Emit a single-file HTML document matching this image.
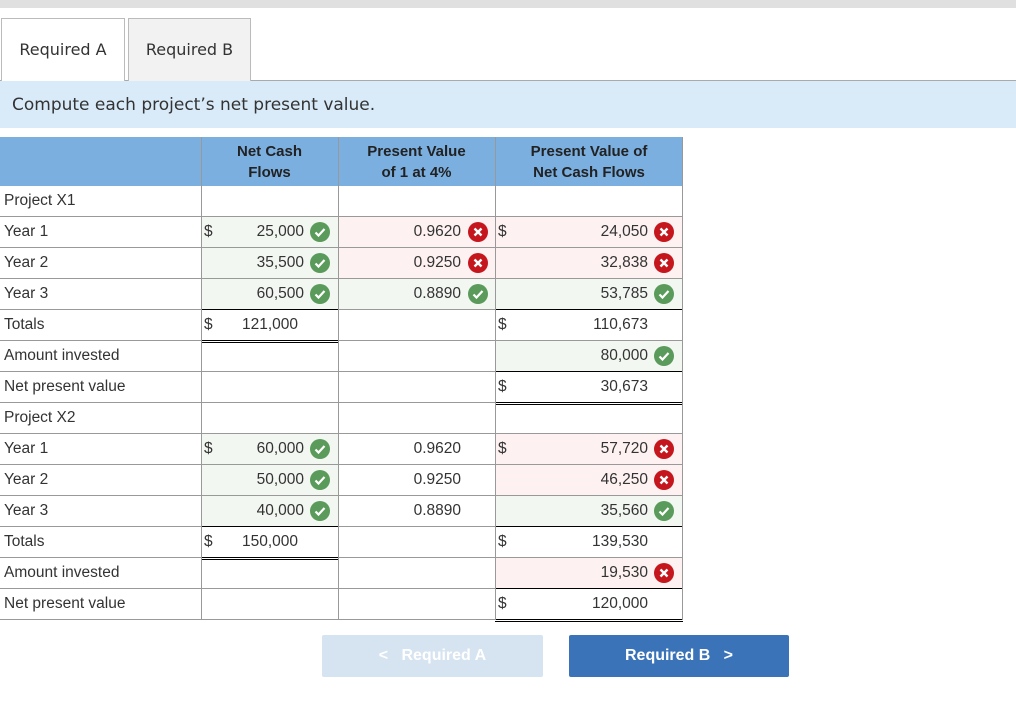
<!DOCTYPE html>
<html><head><meta charset="utf-8"><style>
*{margin:0;padding:0;box-sizing:border-box}
body{width:1016px;height:710px;background:#fff;position:relative;overflow:hidden;font-family:"Liberation Sans",sans-serif;color:#333}
.a{position:absolute}
.tab{position:absolute;top:18px;height:63px;border:1px solid #bbb;border-bottom:none;font-family:"DejaVu Sans",sans-serif;font-size:16px;line-height:62px;text-align:center;color:#333}
.h{position:absolute;top:137px;height:49px;background:#7bafe0;font-weight:bold;font-size:15px;text-align:center;line-height:21px;padding-top:4px;color:#222}
.row{position:absolute;left:0;width:683px;height:31px;border-bottom:1px solid #999}
.lbl{position:absolute;left:4px;font-size:15.5px;line-height:30px}
.c{position:absolute;top:0;height:30px;font-size:15.5px;line-height:30px}
.ic{position:absolute;width:20px;height:20px;border-radius:50%;top:5px}
.ok{background:#5a9a5a}.no{background:#c4161c}
.ic svg{position:absolute;left:0;top:0}
.v{position:absolute;top:137px;width:1px;height:483px;background:#999}
</style></head><body>
<div class="a" style="left:0;top:0;width:1016px;height:8px;background:#e0e0e0"></div>
<div class="a" style="left:0;top:80px;width:1016px;height:1px;background:#aaa"></div>
<div class="tab" style="left:1px;width:124px;background:#fff;height:64px">Required A</div>
<div class="tab" style="left:128px;width:123px;background:#f2f2f2">Required B</div>
<div class="a" style="left:0;top:81px;width:1016px;height:47px;background:#d9eaf8;font-family:'DejaVu Sans',sans-serif;font-size:17px;line-height:48px;padding-left:12px;color:#333">Compute each project’s net present value.</div>
<div class="h" style="left:0;width:201px"></div>
<div class="h" style="left:201px;width:137px">Net Cash<br>Flows</div>
<div class="h" style="left:338px;width:157px">Present Value<br>of 1 at 4%</div>
<div class="h" style="left:495px;width:188px">Present Value of<br>Net Cash Flows</div>
<div id="t"></div>
<div class="v" style="left:201px"></div><div class="v" style="left:338px"></div><div class="v" style="left:495px"></div><div class="v" style="left:682px"></div>
<div class="a" style="left:322px;top:635px;width:221px;height:42px;background:#d6e3f0;border-radius:2px;color:#fff;font-weight:bold;font-size:16px;line-height:42px;text-align:center">&lt;&nbsp;&nbsp; Required A</div>
<div class="a" style="left:569px;top:635px;width:220px;height:42px;background:#3a73b8;border-radius:2px;color:#fff;font-weight:bold;font-size:16px;line-height:42px;text-align:center">Required B &nbsp;&nbsp;&gt;</div>
<script>
var OK='<div class="ic ok" style="left:X"><svg width="20" height="20"><path d="M5.5 10.5l3 3 6-6.5" stroke="#fff" stroke-width="2.2" fill="none"/></svg></div>';
var NO='<div class="ic no" style="left:X"><svg width="20" height="20"><path d="M6.5 6.5l7 7M13.5 6.5l-7 7" stroke="#fff" stroke-width="2.4"/></svg></div>';
function ic(t,x){return t?(t=='o'?OK:NO).replace('X',x+'px'):''}
var G='#f3f7f2',P='#fdf1f1';
var R=[
['Project X1'],
['Year 1',[1,'25,000','o',G],['0.9620','x',P],[1,'24,050','x',P]],
['Year 2',[0,'35,500','o',G],['0.9250','x',P],[0,'32,838','x',P]],
['Year 3',[0,'60,500','o',G],['0.8890','o',G],[0,'53,785','o',G]],
['Totals',[1,'121,000','t',''],null,[1,'110,673','t','']],
['Amount invested',null,null,[0,'80,000','o',G]],
['Net present value',null,null,[1,'30,673','t','']],
['Project X2'],
['Year 1',[1,'60,000','o',G],['0.9620','',''],[1,'57,720','x',P]],
['Year 2',[0,'50,000','o',G],['0.9250','',''],[0,'46,250','x',P]],
['Year 3',[0,'40,000','o',G],['0.8890','',''],[0,'35,560','o',G]],
['Totals',[1,'150,000','t',''],null,[1,'139,530','t','']],
['Amount invested',null,null,[0,'19,530','x',P]],
['Net present value',null,null,[1,'120,000','t','']]
];
var h='';
R.forEach(function(r,i){
 var y=186+31*i;h+='<div class="row" style="top:'+y+'px"><div class="lbl">'+r[0]+'</div>';
 var a=r[1];
 if(a){h+='<div class="c" style="left:202px;width:136px;background:'+a[3]+'"></div>';
  if(a[0])h+='<div class="c" style="left:204px">$</div>';
  if(a[2]=='t')h+='<div class="c" style="left:242px">'+a[1]+'</div>';
  else h+='<div class="c" style="right:379px">'+a[1]+'</div>'+ic(a[2],310);}
 var b=r[2];
 if(b){h+='<div class="c" style="left:339px;width:156px;background:'+b[2]+'"></div><div class="c" style="right:222px">'+b[0]+'</div>'+ic(b[1],468);}
 var c=r[3];
 if(c){h+='<div class="c" style="left:496px;width:186px;background:'+c[3]+'"></div>';
  if(c[0])h+='<div class="c" style="left:498px">$</div>';
  h+='<div class="c" style="right:35px">'+c[1]+'</div>';
  if(c[2]!='t')h+=ic(c[2],654);}
 h+='</div>';
});
function L(x,y,w){h+='<div class="a" style="left:'+x+'px;top:'+y+'px;width:'+w+'px;height:1px;background:#000"></div>'}
L(201,309,137);L(495,309,188);L(201,340,137);L(201,342,137);L(495,402,188);L(495,404,188);
L(201,526,137);L(495,526,188);L(201,557,137);L(201,559,137);L(495,619,188);L(495,621,188);
L(495,371,188);L(495,588,188);
document.getElementById('t').innerHTML=h;
</script>
</body></html>
